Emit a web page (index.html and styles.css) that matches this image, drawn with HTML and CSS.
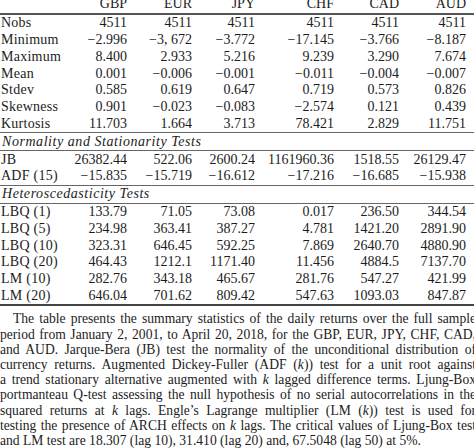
FILE: index.html
```html
<!DOCTYPE html>
<html>
<head>
<meta charset="utf-8">
<link rel="stylesheet" href="styles.css">
</head>
<body>
<div class="page">
<table class="stats">
<colgroup>
<col class="c-label"><col class="c-gbp"><col class="c-eur"><col class="c-jpy"><col class="c-chf"><col class="c-cad"><col class="c-aud">
</colgroup>
<thead>
<tr><th></th><th>GBP</th><th>EUR</th><th>JPY</th><th>CHF</th><th>CAD</th><th>AUD</th></tr>
</thead>
<tbody>
<tr><td>Nobs</td><td>4511</td><td>4511</td><td>4511</td><td>4511</td><td>4511</td><td>4511</td></tr>
<tr><td>Minimum</td><td>−2.996</td><td>−3, 672</td><td>−3.772</td><td>−17.145</td><td>−3.766</td><td>−8.187</td></tr>
<tr><td>Maximum</td><td>8.400</td><td>2.933</td><td>5.216</td><td>9.239</td><td>3.290</td><td>7.674</td></tr>
<tr><td>Mean</td><td>0.001</td><td>−0.006</td><td>−0.001</td><td>−0.011</td><td>−0.004</td><td>−0.007</td></tr>
<tr><td>Stdev</td><td>0.585</td><td>0.619</td><td>0.647</td><td>0.719</td><td>0.573</td><td>0.826</td></tr>
<tr><td>Skewness</td><td>0.901</td><td>−0.023</td><td>−0.083</td><td>−2.574</td><td>0.121</td><td>0.439</td></tr>
<tr><td>Kurtosis</td><td>11.703</td><td>1.664</td><td>3.713</td><td>78.421</td><td>2.829</td><td>11.751</td></tr>
<tr class="section"><td colspan="7">Normality and Stationarity Tests</td></tr>
<tr><td>JB</td><td>26382.44</td><td>522.06</td><td>2600.24</td><td>1161960.36</td><td>1518.55</td><td>26129.47</td></tr>
<tr><td>ADF (15)</td><td>−15.835</td><td>−15.719</td><td>−16.612</td><td>−17.216</td><td>−16.685</td><td>−15.938</td></tr>
<tr class="section"><td colspan="7">Heteroscedasticity Tests</td></tr>
<tr><td>LBQ (1)</td><td>133.79</td><td>71.05</td><td>73.08</td><td>0.017</td><td>236.50</td><td>344.54</td></tr>
<tr><td>LBQ (5)</td><td>234.98</td><td>363.41</td><td>387.27</td><td>4.781</td><td>1421.20</td><td>2891.90</td></tr>
<tr><td>LBQ (10)</td><td>323.31</td><td>646.45</td><td>592.25</td><td>7.869</td><td>2640.70</td><td>4880.90</td></tr>
<tr><td>LBQ (20)</td><td>464.43</td><td>1212.1</td><td>1171.40</td><td>11.456</td><td>4884.5</td><td>7137.70</td></tr>
<tr><td>LM (10)</td><td>282.76</td><td>343.18</td><td>465.67</td><td>281.76</td><td>547.27</td><td>421.99</td></tr>
<tr class="last"><td>LM (20)</td><td>646.04</td><td>701.62</td><td>809.42</td><td>547.63</td><td>1093.03</td><td>847.87</td></tr>
</tbody>
</table>
<div class="caption">
<span class="line first">The table presents the summary statistics of the daily returns over the full sample</span>
<span class="line">period from January 2, 2001, to April 20, 2018, for the GBP, EUR, JPY, CHF, CAD,</span>
<span class="line">and AUD. Jarque-Bera (JB) test the normality of the unconditional distribution of</span>
<span class="line">currency returns. Augmented Dickey-Fuller (ADF (<i>k</i>)) test for a unit root against</span>
<span class="line">a trend stationary alternative augmented with <i>k</i> lagged difference terms. Ljung-Box</span>
<span class="line">portmanteau Q-test assessing the null hypothesis of no serial autocorrelations in the</span>
<span class="line">squared returns at <i>k</i> lags. Engle’s Lagrange multiplier (LM (<i>k</i>)) test is used for</span>
<span class="line">testing the presence of ARCH effects on <i>k</i> lags. The critical values of Ljung-Box test</span>
<span class="line end">and LM test are 18.307 (lag 10), 31.410 (lag 20) and, 67.5048 (lag 50) at 5%.</span>
</div>
</div>
</body>
</html>
```
FILE: styles.css
```css
html, body {
  margin: 0;
  padding: 0;
  background: #fff;
  overflow: hidden;
}
.page {
  width: 480px;
  padding-top: 3px;
  font-family: "Liberation Serif", "Times New Roman", serif;
  color: #1c1c1c;
}
.stats {
  width: 474px;
  margin-top: -7px;
  border-collapse: collapse;
  table-layout: fixed;
  font-size: 14px;
}
.c-label { width: 70px; }
.c-gbp { width: 57px; }
.c-eur { width: 65px; }
.c-jpy { width: 63px; }
.c-chf { width: 79px; }
.c-cad { width: 65px; }
.c-aud { width: 75px; }
.stats th, .stats td {
  padding: 0;
  height: 16.8px;
  line-height: 16px;
  vertical-align: middle;
  text-align: right;
  font-weight: normal;
  white-space: nowrap;
}
.stats th:last-child, .stats td:last-child {
  padding-right: 8px;
}
.stats td:first-child {
  text-align: left;
  padding-left: 1px;
  letter-spacing: 0.25px;
}
.stats thead tr {
  border-bottom: 2px solid #555;
}
.stats .section td {
  text-align: left;
  font-style: italic;
  letter-spacing: 0.55px;
  border-top: 1px solid #666;
  border-bottom: 1px solid #666;
  padding-left: 2px;
}
.stats .last {
  border-bottom: 2px solid #444;
}
.caption {
  margin: 5px 0 0 0;
  width: 476px;
  font-size: 13.6px;
  line-height: 15.2px;
}
.line {
  display: block;
  white-space: nowrap;
  text-align: justify;
  text-align-last: justify;
}
.line.first {
  padding-left: 13px;
}
.line.end {
  text-align-last: left;
}
```
